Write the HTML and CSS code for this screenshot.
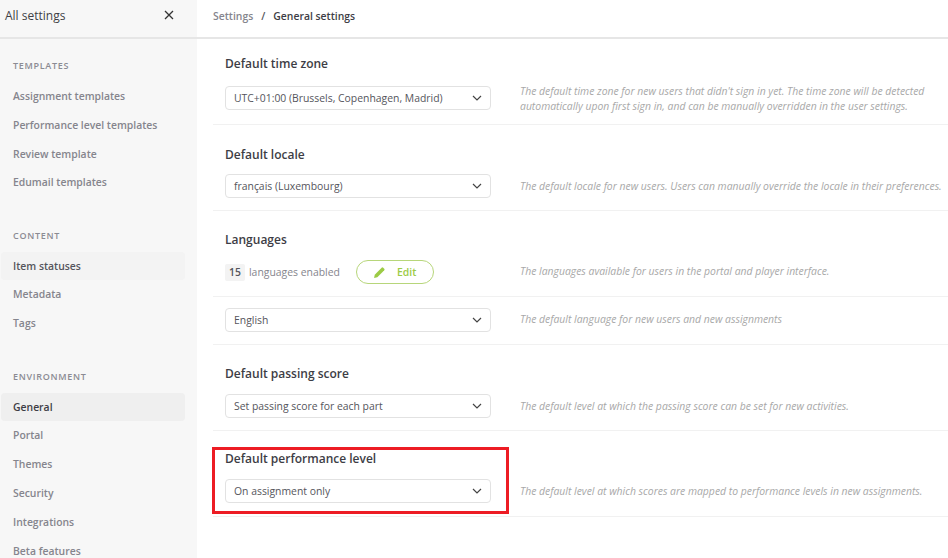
FILE: index.html
```html
<!DOCTYPE html>
<html lang="en">
<head>
<meta charset="utf-8">
<title>General settings</title>
<link rel="stylesheet" href="styles.css">
</head>
<body>
<div class="app">
  <aside class="sidebar">
    <div class="side-head">
      <span class="side-title">All settings</span>
      <svg class="close" width="10" height="10" viewBox="0 0 10 10"><path d="M1 1l8 8M9 1l-8 8" stroke="#333" stroke-width="1.3" fill="none"/></svg>
    </div>
    <nav class="side-nav">
      <div class="group">
        <div class="group-label">TEMPLATES</div>
        <a class="item">Assignment templates</a>
        <a class="item">Performance level templates</a>
        <a class="item">Review template</a>
        <a class="item">Edumail templates</a>
      </div>
      <div class="group">
        <div class="group-label">CONTENT</div>
        <a class="item item-hover">Item statuses</a>
        <a class="item">Metadata</a>
        <a class="item">Tags</a>
      </div>
      <div class="group">
        <div class="group-label">ENVIRONMENT</div>
        <a class="item item-active">General</a>
        <a class="item">Portal</a>
        <a class="item">Themes</a>
        <a class="item">Security</a>
        <a class="item">Integrations</a>
        <a class="item">Beta features</a>
      </div>
    </nav>
  </aside>
  <main class="main">
    <header class="crumbs">
      <span class="crumb">Settings</span>
      <span class="crumb-sep">/</span>
      <span class="crumb-current">General settings</span>
    </header>
    <section class="rows">
      <div class="row row-first">
        <div class="field">
          <h2 class="title">Default time zone</h2>
          <div class="select"><span>UTC+01:00 (Brussels, Copenhagen, Madrid)</span><svg class="chev" width="10" height="6" viewBox="0 0 10 6"><path d="M1 1l4 4 4-4" stroke="#444" stroke-width="1.2" fill="none"/></svg></div>
        </div>
        <p class="desc">The default time zone for new users that didn't sign in yet. The time zone will be detected automatically upon first sign in, and can be manually overridden in the user settings.</p>
      </div>
      <div class="row row-locale">
        <div class="field">
          <h2 class="title">Default locale</h2>
          <div class="select"><span>français (Luxembourg)</span><svg class="chev" width="10" height="6" viewBox="0 0 10 6"><path d="M1 1l4 4 4-4" stroke="#444" stroke-width="1.2" fill="none"/></svg></div>
        </div>
        <p class="desc">The default locale for new users. Users can manually override the locale in their preferences.</p>
      </div>
      <div class="row">
        <div class="field">
          <h2 class="title">Languages</h2>
          <div class="lang-line">
            <span class="count">15</span>
            <span class="lang-text">languages enabled</span>
            <button class="edit"><svg width="13" height="13" viewBox="0 0 12 12"><path d="M1 11l.6-3L8 1.6a1 1 0 0 1 1.4 0l1 1a1 1 0 0 1 0 1.4L4 10.4z" fill="#9ccb45"/></svg><span>Edit</span></button>
          </div>
        </div>
        <p class="desc">The languages available for users in the portal and player interface.</p>
      </div>
      <div class="row row-plain">
        <div class="field">
          <div class="select"><span>English</span><svg class="chev" width="10" height="6" viewBox="0 0 10 6"><path d="M1 1l4 4 4-4" stroke="#444" stroke-width="1.2" fill="none"/></svg></div>
        </div>
        <p class="desc">The default language for new users and new assignments</p>
      </div>
      <div class="row row-passing">
        <div class="field">
          <h2 class="title">Default passing score</h2>
          <div class="select"><span>Set passing score for each part</span><svg class="chev" width="10" height="6" viewBox="0 0 10 6"><path d="M1 1l4 4 4-4" stroke="#444" stroke-width="1.2" fill="none"/></svg></div>
        </div>
        <p class="desc">The default level at which the passing score can be set for new activities.</p>
      </div>
      <div class="row row-marked">
        <div class="field">
          <h2 class="title">Default performance level</h2>
          <div class="select"><span>On assignment only</span><svg class="chev" width="10" height="6" viewBox="0 0 10 6"><path d="M1 1l4 4 4-4" stroke="#444" stroke-width="1.2" fill="none"/></svg></div>
        </div>
        <p class="desc">The default level at which scores are mapped to performance levels in new assignments.</p>
        <div class="mark"></div>
      </div>
    </section>
  </main>
</div>
</body>
</html>
```

FILE: styles.css
```css
* { box-sizing: border-box; }
html, body { margin: 0; height: 100%; overflow: hidden; background: #fff; }
body { font-family: "Open Sans", "Liberation Sans", sans-serif; color: #3d3d45; }

.app { display: flex; height: 558px; overflow: hidden; }

.sidebar { width: 197px; flex: none; background: #f7f7f7; overflow: hidden; }
.side-head {
  height: 39px; display: flex; align-items: center; justify-content: space-between;
  padding: 0 23px 7px 5px; border-bottom: 2px solid #e6e6e6;
}
.side-title { font-size: 12px; color: #3f3f46; }
.close { display: block; }
.side-nav { padding: 0 12px 0 1px; }
.group { margin-bottom: 29.5px; }
.group-label {
  height: 18px; margin: 18px 0 7px; padding-left: 12px; line-height: 18px;
  font-size: 9px; font-weight: 600; letter-spacing: 0.7px; color: #8b8b93;
}
.group:not(:first-child) .group-label { margin-top: 0; }
.item {
  display: block; height: 28.8px; line-height: 28.8px; padding-left: 12px; border-radius: 4px;
  font-size: 10.4px; font-weight: 600; color: #85858d;
}
.item-hover { background: #f3f3f3; color: #55555c; }
.item-active { background: #efefef; color: #3d3d45; }

.main { flex: 1; min-width: 0; }
.crumbs {
  height: 39px; padding: 0 0 6px 16px; display: flex; align-items: center;
  font-size: 10.4px; border-bottom: 2px solid #e6e6e6;
}
.crumb { color: #85858d; font-weight: 600; }
.crumb-sep { margin: 0 8px; color: #55555c; font-weight: 600; }
.crumb-current { color: #3d3d45; font-weight: 600; }

.rows { padding-left: 16px; }
.row {
  position: relative; display: flex; align-items: flex-end;
  padding: 17px 0 12px 12px; border-bottom: 1px solid #f1f1f1;
}
.row-first { padding-top: 13px; padding-bottom: 14px; }
.row-first .title { margin-bottom: 10px; }
.row-first .desc { padding-bottom: 0; margin-bottom: -4px; }
.row-locale { padding-top: 18px; }
.row-locale .title { margin-bottom: 7px; }
.row-locale .desc, .row-passing .desc, .row-marked .desc { padding-bottom: 4px; }
.row-plain { padding-top: 11px; }
.row-marked { padding-top: 16px; padding-bottom: 13px; }
.field { width: 266px; flex: none; }
.title {
  margin: 0 0 8px; height: 24px; line-height: 24px;
  font-size: 12px; font-weight: 600; color: #3d3d45;
}
.select {
  height: 24px; padding: 0 8px; display: flex; align-items: center; justify-content: space-between;
  background: #fff; border: 1px solid #e2e2e2; border-radius: 4px;
  font-size: 10.4px; color: #55555c;
}
.chev { display: block; margin-right: 0; }
.desc {
  margin: 0 0 0 29px; flex: 1; min-width: 0; padding-bottom: 5px;
  font-size: 10.4px; line-height: 15px; font-style: italic; color: #a8a8a8;
}
.lang-line { height: 24px; display: flex; align-items: center; font-size: 10.4px; color: #85858d; }
.count {
  width: 20px; height: 17px; line-height: 17px; text-align: center; border-radius: 2px;
  background: #f3f3f3; color: #55555c; font-weight: 600; margin-right: 4px;
}
.lang-text { width: 107px; }
.edit {
  width: 78px; height: 24px; padding: 0 0 0 16px; display: flex; align-items: center; gap: 11px;
  background: #fff; border: 1px solid #b7d67a; border-radius: 12px;
  font: 600 10.4px "Open Sans", sans-serif; color: #9ccb45;
}
.edit svg { display: block; }
.mark {
  position: absolute; left: -1px; top: 16px; width: 297px; height: 67px;
  border: 3px solid #ed1c24; pointer-events: none;
}
```
